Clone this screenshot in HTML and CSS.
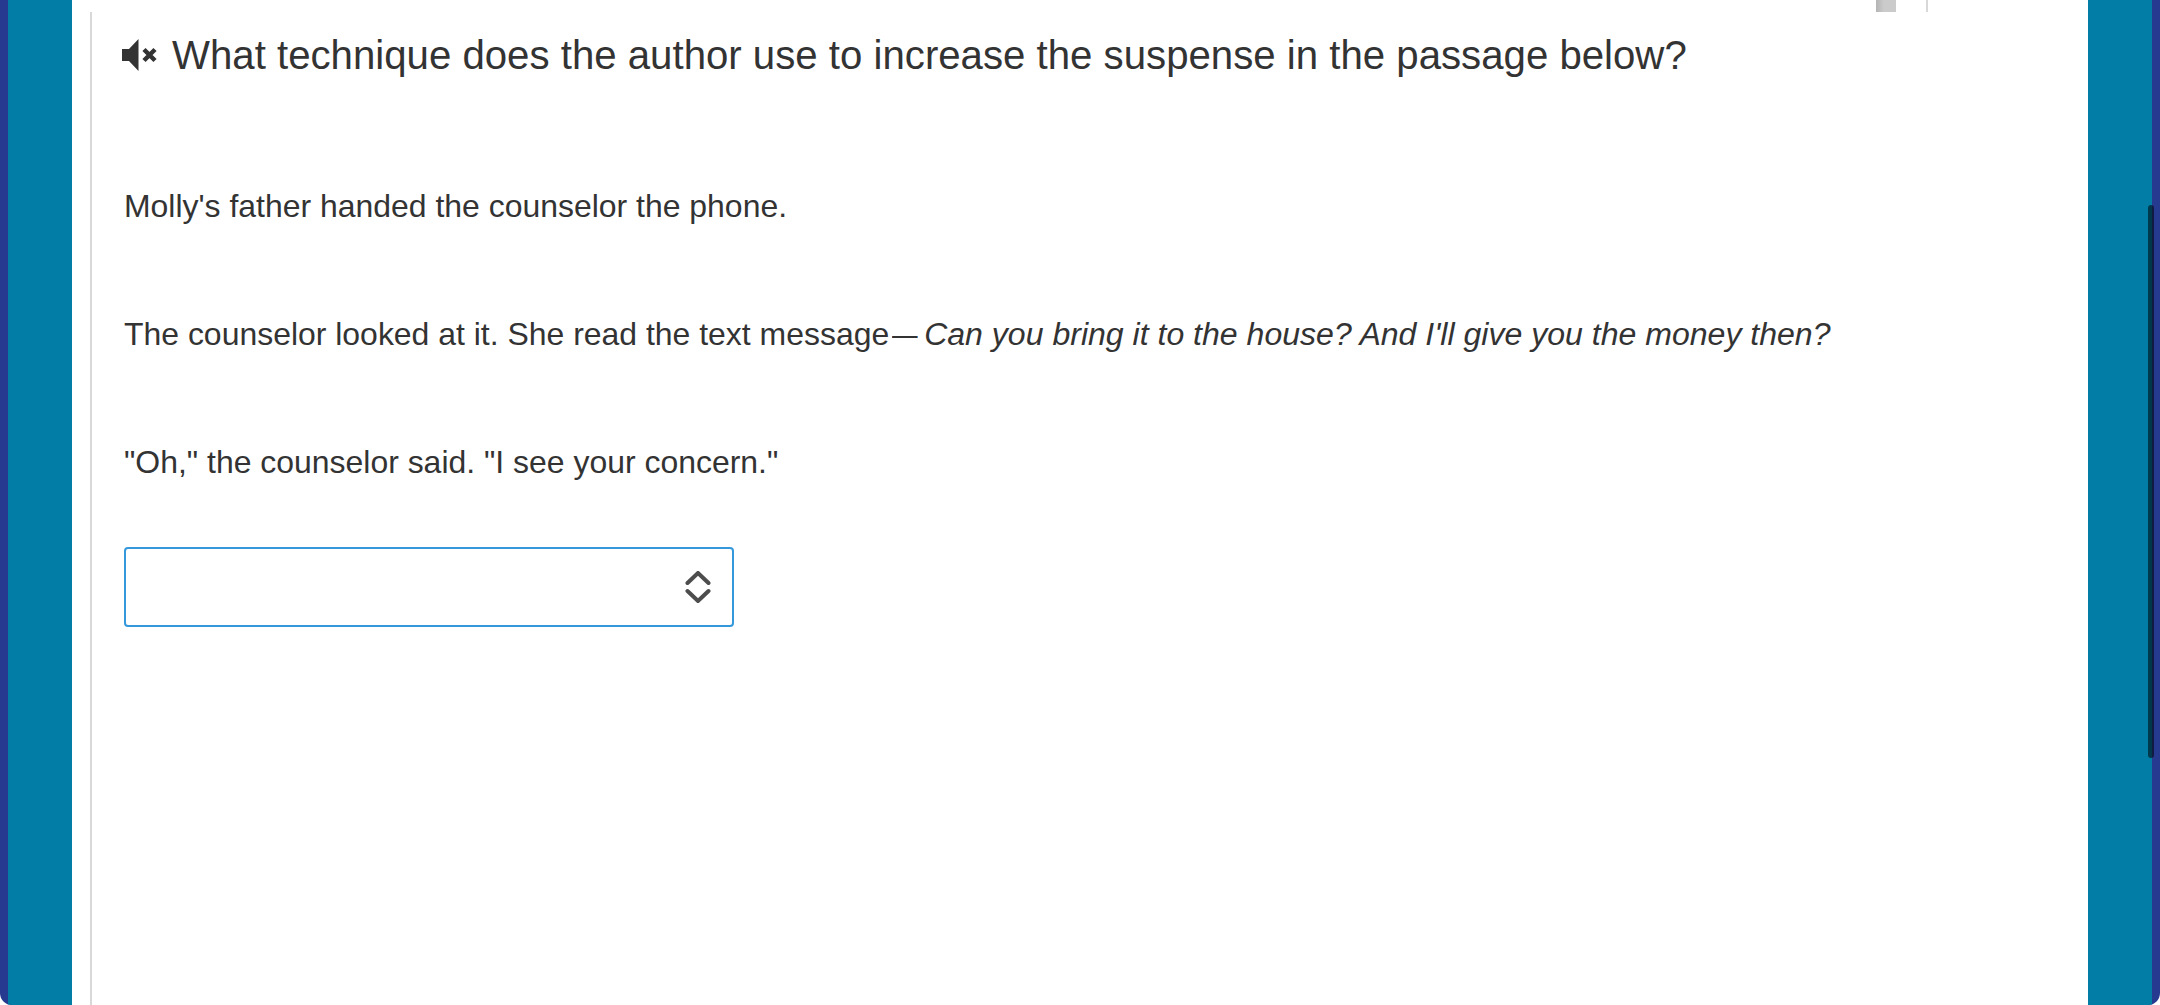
FILE: index.html
```html
<!DOCTYPE html>
<html lang="en">
<head>
<meta charset="utf-8">
<title>Question</title>
<link rel="stylesheet" href="styles.css">
</head>
<body>
<div class="frame">
  <div class="teal">
    <main class="card">
      <div class="strip"><span class="thumb"></span><span class="tick"></span></div>
      <section class="question">
        <h1 class="prompt">
          <svg class="mute" viewBox="0 0 36 32" aria-hidden="true"><path d="M0 10h7L16.500 0v32L7 22H0z" fill="#333"/><path d="M22 10.500l11 11M33 10.500l-11 11" stroke="#333" stroke-width="4.500" fill="none"/></svg>
          <span class="prompt-text">What technique does the author use to increase the suspense in the passage below?</span>
        </h1>
        <p class="para first">Molly's father handed the counselor the phone.</p>
        <p class="para">The counselor looked at it. She read the text message<span class="dash">—</span><em class="aside">Can you bring it to the house? And I'll give you the money then?</em></p>
        <p class="para">"Oh," the counselor said. "I see your concern."</p>
        <div class="select">
          <svg class="updown" viewBox="0 0 28 32" aria-hidden="true"><path d="M3.500 12l10.500-10 10.500 10M3.500 20l10.500 10 10.500-10" stroke="#4d4d4d" stroke-width="4" stroke-linecap="round" stroke-linejoin="miter" fill="none"/></svg>
        </div>
      </section>
    </main>
  </div>
</div>
<div class="scrollbar"></div>
</body>
</html>
```
FILE: styles.css
```css
* { box-sizing: border-box; }
html, body { margin: 0; height: 100%; background: #fff; overflow: hidden; }
body { font-family: "Liberation Sans", Arial, sans-serif; color: #333; position: relative; }
.frame { height: 100vh; padding: 0 8px; background: #263b90; border-radius: 0 0 12px 12px; overflow: hidden; }
.teal { height: 100%; padding: 0 64px; background: #027da6; }
.card { height: 100%; background: #fff; display: flex; flex-direction: column; }
.strip { height: 12px; flex: none; display: flex; justify-content: flex-end; padding-right: 160px; }
.thumb { width: 20px; background: linear-gradient(90deg, #b4b4b4, #cbcbcb 40%); margin-right: 30px; }
.tick { width: 2px; background: #d8d8d8; }
.question { flex: 1; margin-left: 18px; border-left: 2px solid #d8d8d8; padding: 26px 0 0 32px; }
.prompt { margin: 0 0 0 -2px; display: flex; align-items: center; gap: 14px; font-size: 40.2px; line-height: 34px; font-weight: 400; height: 34px; }
.prompt-text { position: relative; top: 0.5px; }
.mute { width: 36px; height: 32px; flex: none; }
.para { margin: 88px 0 0; font-size: 31.95px; line-height: 40px; height: 40px; white-space: nowrap; }
.para.first { margin-top: 114px; }
.dash { display: inline-block; margin: 0 0 0 3px; transform: scaleX(0.8); transform-origin: left center; }
.aside { font-size: 32.05px; }
.select { width: 610px; height: 80px; margin-top: 65px; border: 2px solid #3498db; border-radius: 4px; display: flex; align-items: center; justify-content: flex-end; padding-right: 20px; background: #fff; }
.updown { width: 28px; height: 32px; }
.scrollbar { position: absolute; left: 2148px; top: 205px; width: 6px; height: 553px; border-radius: 3px; background: rgba(0, 0, 0, 0.55); }
```
